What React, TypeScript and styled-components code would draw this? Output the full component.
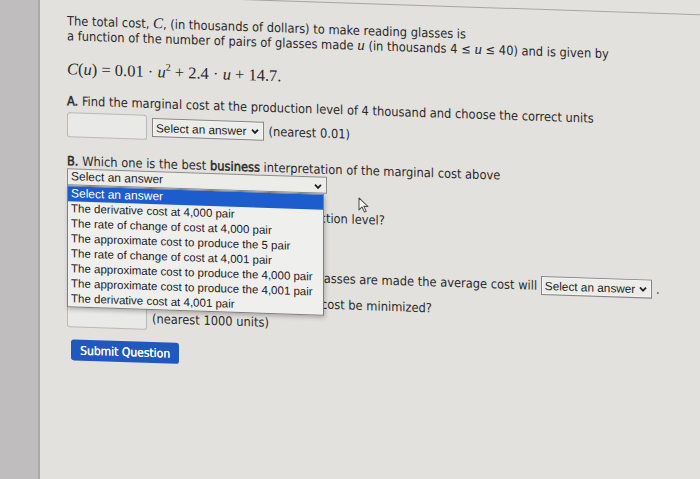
import styled, { createGlobalStyle } from "styled-components";

const GlobalStyle = createGlobalStyle`
  html, body {
    margin: 0;
    padding: 0;
    background: #e3e1de;
    overflow: hidden;
  }
  #root {
    height: 479px;
    overflow: hidden;
  }
`;

const Page = styled.div`
  display: flex;
  height: 540px;
  margin-top: -9px;
  transform: skewY(1.9deg);
  transform-origin: 0 0;
`;

const Sidebar = styled.div`
  width: 38px;
  flex: none;
  background: #bfbdbe;
  border-right: 2px solid #aba9aa;
`;

const Main = styled.div`
  position: relative;
  flex: 1;
  background: #e3e1de;
  border-top: 1px solid #a9a7a4;
  padding: 19px 0 0 27px;
  color: #2a2a2a;
  font-family: "DejaVu Sans Condensed", "DejaVu Sans", sans-serif;
  font-size: 12.75px;
`;

const Para = styled.div<{ $mt?: number }>`
  margin-top: ${(p) => p.$mt ?? 0}px;
  line-height: 14px;
  white-space: nowrap;
`;

const Strong = styled.b`
  font-weight: 400;
  -webkit-text-stroke: 0.45px #2a2a2a;
`;

const MathLine = styled.div<{ $mt?: number }>`
  margin-top: ${(p) => p.$mt ?? 0}px;
  font-family: "Liberation Serif", "DejaVu Serif", serif;
  font-size: 16.5px;
  line-height: 18px;
  white-space: nowrap;
`;

const Var = styled.i`
  font-family: "Liberation Serif", "DejaVu Serif", serif;
  font-size: 15px;
`;

const Sup = styled.sup`
  font-size: 10px;
  vertical-align: 7px;
  line-height: 0;
`;

const Row = styled.div<{ $mt?: number }>`
  display: flex;
  align-items: center;
  gap: 5px;
  margin-top: ${(p) => p.$mt ?? 0}px;
  white-space: nowrap;
`;

const InputBox = styled.div<{ $h?: number }>`
  width: 78px;
  height: ${(p) => p.$h ?? 23}px;
  background: #e9e9e7;
  border: 1px solid #b9b9b7;
  border-radius: 3px;
`;

const SmallSelect = styled.div`
  display: inline-flex;
  align-items: center;
  gap: 4px;
  height: 17px;
  padding: 0 4px 0 3px;
  background: #ecece9;
  border: 1px solid #858585;
  box-shadow: inset 0 0 0 1px #f4f4f2;
  font-family: "Liberation Sans", Arial, sans-serif;
  font-size: 11.8px;
  color: #1f1f1f;
`;

const Chevron = () => (
  <svg width="8" height="6" viewBox="0 0 8 6">
    <path d="M1 1.2 L4 4.4 L7 1.2" fill="none" stroke="#222" strokeWidth="1.8" />
  </svg>
);

const SelectWrap = styled.div`
  position: relative;
  width: 260px;
`;

const BigSelect = styled.div`
  display: flex;
  align-items: flex-start;
  justify-content: space-between;
  height: 15px;
  padding: 0 4px 0 3px;
  background: #ecece9;
  border: 1px solid #8a8a8a;
  font-family: "Liberation Sans", Arial, sans-serif;
  font-size: 12px;
  line-height: 14px;
  color: #1f1f1f;
`;

const ChevronDown = styled.span`
  display: flex;
  padding-top: 6px;
`;

const List = styled.div`
  position: absolute;
  top: 100%;
  left: 0;
  width: 255px;
  z-index: 2;
  background: #efefee;
  border: 1px solid #7f7f7f;
  box-shadow: 1px 2px 4px rgba(0, 0, 0, 0.25);
  font-family: "Liberation Sans", Arial, sans-serif;
  font-size: 11.5px;
  color: #1c1c1c;
`;

const Option = styled.div<{ $active?: boolean }>`
  height: 15px;
  line-height: 15px;
  padding-left: 3px;
  white-space: nowrap;
  overflow: hidden;
  background: ${(p) => (p.$active ? "#1d5ccd" : "transparent")};
  color: ${(p) => (p.$active ? "#ffffff" : "#1c1c1c")};
  font-size: ${(p) => (p.$active ? "12px" : "inherit")};
`;

const InlineRow = styled.div<{ $mt?: number }>`
  display: flex;
  align-items: center;
  height: 19px;
  margin-top: ${(p) => p.$mt ?? 0}px;
  white-space: nowrap;
`;

const Hint = styled.span`
  margin-left: 0;
`;

const SubmitButton = styled.button<{ $mt?: number }>`
  display: block;
  margin: ${(p) => p.$mt ?? 0}px 0 0 4px;
  height: 21px;
  width: 108px;
  padding: 0;
  background: #2158c0;
  border: none;
  border-radius: 3px;
  color: #ffffff;
  font-family: "DejaVu Sans Condensed", "DejaVu Sans", sans-serif;
  font-size: 12px;
  font-weight: 400;
  text-shadow: 0.3px 0 0 #ffffff;
`;

const Cursor = styled.svg`
  position: absolute;
  left: 318px;
  top: 193px;
  z-index: 3;
`;

const options = [
  "Select an answer",
  "The derivative cost at 4,000 pair",
  "The rate of change of cost at 4,000 pair",
  "The approximate cost to produce the 5 pair",
  "The rate of change of cost at 4,001 pair",
  "The approximate cost to produce the 4,000 pair",
  "The approximate cost to produce the 4,001 pair",
  "The derivative cost at 4,001 pair",
];

export default function App() {
  return (
    <>
      <GlobalStyle />
      <Page>
        <Sidebar />
        <Main>
          <Para>
            The total cost, <Var>C</Var>, (in thousands of dollars) to make reading glasses is
          </Para>
          <Para>
            a function of the number of pairs of glasses made <Var>u</Var> (in thousands 4 ≤ <Var>u</Var> ≤ 40) and is given by
          </Para>

          <MathLine $mt={17}>
            <i>C</i>(<i>u</i>) = 0.01 · <i>u</i>
            <Sup>2</Sup> + 2.4 · <i>u</i> + 14.7.
          </MathLine>

          <Para $mt={16}>
            <Strong>A.</Strong> Find the marginal cost at the production level of 4 thousand and choose the correct units
          </Para>
          <Row $mt={4}>
            <InputBox $h={23} />
            <SmallSelect>
              Select an answer <Chevron />
            </SmallSelect>
            <Hint>(nearest 0.01)</Hint>
          </Row>

          <Para $mt={17}>
            <Strong>B.</Strong> Which one is the best <Strong>business</Strong> interpretation of the marginal cost above
          </Para>
          <SelectWrap>
            <BigSelect>
              Select an answer
              <ChevronDown>
                <Chevron />
              </ChevronDown>
            </BigSelect>
            <List>
              {options.map((o, i) => (
                <Option key={o} $active={i === 0}>
                  {o}
                </Option>
              ))}
            </List>
          </SelectWrap>

          <Para $mt={18}>
            <Strong>C.</Strong> Find the average cost at the above production level?
          </Para>
          <Row $mt={4}>
            <InputBox $h={23} />
            <Hint>(nearest 0.01)</Hint>
          </Row>

          <InlineRow $mt={14}>
            <Strong>D.</Strong>&nbsp;As production level increases and more glasses are made the average cost will&nbsp;
            <SmallSelect>
              Select an answer <Chevron />
            </SmallSelect>
            &nbsp;.
          </InlineRow>

          <Para $mt={10}>
            <Strong>E.</Strong> At what production level will the average cost be minimized?
          </Para>
          <Row $mt={1}>
            <InputBox $h={21} />
            <Hint>(nearest 1000 units)</Hint>
          </Row>

          <SubmitButton $mt={12}>Submit Question</SubmitButton>

          <Cursor width="11" height="16" viewBox="0 0 11 16">
            <path
              d="M1 1 L1 13 L4 10 L6.5 15 L8.3 14.2 L5.8 9.3 L10 9.3 Z"
              fill="#f4f4f4"
              stroke="#4a4a4a"
              strokeWidth="1"
              strokeLinejoin="round"
            />
          </Cursor>
        </Main>
      </Page>
    </>
  );
}
